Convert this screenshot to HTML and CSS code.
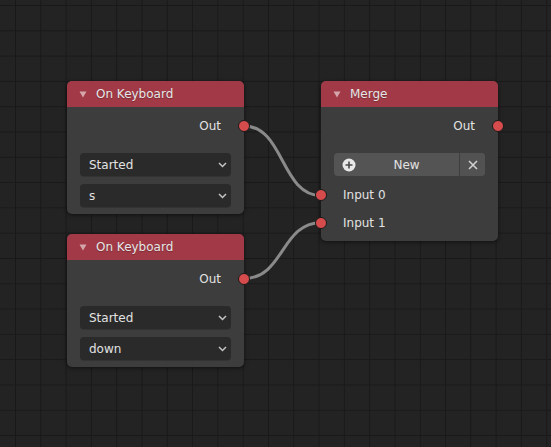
FILE: index.html
```html
<!DOCTYPE html>
<html>
<head>
<meta charset="utf-8">
<link rel="stylesheet" href="styles.css">
</head>
<body>
<div class="canvas">
  <svg class="links" width="551" height="447" viewBox="0 0 551 447">
    <path d="M244,126 C284,126 281,195.5 321,195.5" />
    <path d="M244,278.5 C284,278.5 281,222.7 321,222.7" />
  </svg>

  <div class="node node-a">
    <div class="node-header">
      <svg class="collapse" width="8" height="7" viewBox="0 0 8 7"><path d="M0.5,0.5 L7.5,0.5 L4,6.5 Z"/></svg>
      <span class="title">On Keyboard</span>
    </div>
    <div class="node-body">
      <div class="row row-out"><span>Out</span><i class="socket socket-right"></i></div>
      <div class="select"><span>Started</span><svg class="chev" width="9" height="6" viewBox="0 0 9 6"><path d="M1,1 L4.5,4.5 L8,1"/></svg></div>
      <div class="select"><span>s</span><svg class="chev" width="9" height="6" viewBox="0 0 9 6"><path d="M1,1 L4.5,4.5 L8,1"/></svg></div>
    </div>
  </div>

  <div class="node node-c">
    <div class="node-header">
      <svg class="collapse" width="8" height="7" viewBox="0 0 8 7"><path d="M0.5,0.5 L7.5,0.5 L4,6.5 Z"/></svg>
      <span class="title">On Keyboard</span>
    </div>
    <div class="node-body">
      <div class="row row-out"><span>Out</span><i class="socket socket-right"></i></div>
      <div class="select"><span>Started</span><svg class="chev" width="9" height="6" viewBox="0 0 9 6"><path d="M1,1 L4.5,4.5 L8,1"/></svg></div>
      <div class="select"><span>down</span><svg class="chev" width="9" height="6" viewBox="0 0 9 6"><path d="M1,1 L4.5,4.5 L8,1"/></svg></div>
    </div>
  </div>

  <div class="node node-b">
    <div class="node-header">
      <svg class="collapse" width="8" height="7" viewBox="0 0 8 7"><path d="M0.5,0.5 L7.5,0.5 L4,6.5 Z"/></svg>
      <span class="title">Merge</span>
    </div>
    <div class="node-body">
      <div class="row row-out"><span>Out</span><i class="socket socket-right"></i></div>
      <div class="newbtn">
        <div class="new-main">
          <svg class="plus" width="14" height="14" viewBox="0 0 14 14"><circle cx="7" cy="7" r="6.5"/><path d="M7,3.5 V10.5 M3.5,7 H10.5"/></svg>
          <span class="new-label">New</span>
        </div>
        <div class="new-x">
          <svg width="10" height="10" viewBox="0 0 10 10"><path d="M1,1 L9,9 M9,1 L1,9"/></svg>
        </div>
      </div>
      <div class="row row-in first"><i class="socket socket-left"></i><span>Input 0</span></div>
      <div class="row row-in second"><i class="socket socket-left"></i><span>Input 1</span></div>
    </div>
  </div>
</div>
</body>
</html>
```
FILE: styles.css
```css
html, body {
  margin: 0;
  padding: 0;
  background: #232323;
}

.canvas {
  position: relative;
  width: 551px;
  height: 447px;
  overflow: hidden;
  background-color: #232323;
  background-image:
    linear-gradient(to right, #191919 0, #191919 1px, transparent 1px),
    linear-gradient(to bottom, #191919 0, #191919 1px, transparent 1px);
  background-size: 25.3px 25.3px;
  background-position: 15px 5px;
  font-family: "DejaVu Sans", "Liberation Sans", sans-serif;
  font-size: 12px;
  color: #e2e2e2;
}

.links {
  position: absolute;
  left: 0;
  top: 0;
}

.links path {
  fill: none;
  stroke: #8a8a8a;
  stroke-width: 3;
}

.node {
  position: absolute;
  width: 177px;
  background: #3d3d3d;
  border-radius: 5px;
  box-shadow: 0 1px 4px rgba(0, 0, 0, 0.55);
  display: flex;
  flex-direction: column;
}

.node-a { left: 67px; top: 81px; }
.node-c { left: 67px; top: 234px; }
.node-b { left: 321px; top: 81px; }

.node-header {
  height: 26px;
  background: #a13a46;
  border-radius: 5px 5px 0 0;
  display: flex;
  align-items: center;
  padding-left: 12px;
}

.collapse path {
  fill: rgba(255, 255, 255, 0.55);
}

.title {
  margin-left: 9px;
  color: #e6e6e6;
  text-shadow: 0 1px 1px rgba(0, 0, 0, 0.25);
}

.node-body {
  display: flex;
  flex-direction: column;
  padding: 8px 13px 7px;
}

.row {
  position: relative;
  height: 22px;
  display: flex;
  align-items: center;
}

.row-out {
  justify-content: flex-end;
  padding-right: 10px;
  margin-bottom: 16px;
}

.row-in {
  padding-left: 9px;
}

.row-in.first { margin-top: 8px; }
.row-in.second { margin-top: 6px; }

.socket {
  position: absolute;
  width: 10px;
  height: 10px;
  border-radius: 50%;
  background: #d64c4c;
  border: 1px solid #1a1a1a;
  top: 50%;
  margin-top: -6px;
}

.socket-right { right: -19px; }
.socket-left { left: -19px; }

.select {
  height: 23px;
  background: #2a2a2a;
  border-radius: 4px;
  display: flex;
  align-items: center;
  justify-content: space-between;
  padding: 0 4px 0 9px;
  box-shadow: 0 1px 0 rgba(0, 0, 0, 0.15);
}

.select + .select {
  margin-top: 8px;
}

.chev path {
  fill: none;
  stroke: #c4c4c4;
  stroke-width: 1.5;
}

.newbtn {
  height: 23px;
  display: flex;
  border-radius: 4px;
  background: #545454;
  overflow: hidden;
}

.new-main {
  flex: 1;
  display: flex;
  align-items: center;
  padding-left: 8px;
}

.plus circle {
  fill: #e8e8e8;
}

.plus path {
  stroke: #4a4a4a;
  stroke-width: 1.6;
}

.new-label {
  flex: 1;
  text-align: center;
  padding-right: 2px;
}

.new-x {
  width: 25px;
  border-left: 1px solid #3e3e3e;
  display: flex;
  align-items: center;
  justify-content: center;
  background: #525252;
}

.new-x path {
  stroke: #d0d0d0;
  stroke-width: 1.6;
  fill: none;
}
```
